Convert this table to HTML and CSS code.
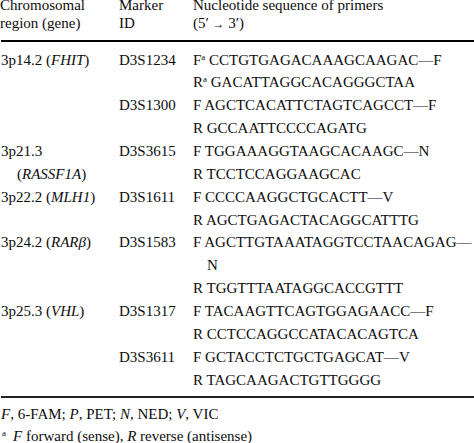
FILE: index.html
```html
<!DOCTYPE html>
<html>
<head>
<meta charset="utf-8">
<link rel="stylesheet" href="styles.css">
</head>
<body>
<div class="page">
<table class="primers">
<colgroup><col class="c1"><col class="c2"><col class="c3"></colgroup>
<thead>
<tr>
<th class="h1">Chromosomal<br>region (gene)</th>
<th>Marker<br>ID</th>
<th>Nucleotide sequence of primers<br>(5′ <span class="arr">→</span> 3′)</th>
</tr>
</thead>
<tbody>
<tr class="first"><td>3p14.2 (<i>FHIT</i>)</td><td>D3S1234</td><td>F<sup>a</sup> CCTGTGAGACAAAGCAAGAC—F</td></tr>
<tr><td></td><td></td><td>R<sup>a</sup> GACATTAGGCACAGGGCTAA</td></tr>
<tr><td></td><td>D3S1300</td><td>F AGCTCACATTCTAGTCAGCCT—F</td></tr>
<tr><td></td><td></td><td>R GCCAATTCCCCAGATG</td></tr>
<tr><td>3p21.3</td><td>D3S3615</td><td>F TGGAAAGGTAAGCACAAGC—N</td></tr>
<tr><td><span class="ind">(<i>RASSF1A</i>)</span></td><td></td><td>R TCCTCCAGGAAGCAC</td></tr>
<tr><td>3p22.2 (<i>MLH1</i>)</td><td>D3S1611</td><td>F CCCCAAGGCTGCACTT—V</td></tr>
<tr><td></td><td></td><td>R AGCTGAGACTACAGGCATTTG</td></tr>
<tr><td>3p24.2 (<i>RARβ</i>)</td><td>D3S1583</td><td class="wrap">F AGCTTGTAAATAGGTCCTAACAGAG—<br><span class="cont">N</span></td></tr>
<tr><td></td><td></td><td>R TGGTTTAATAGGCACCGTTT</td></tr>
<tr><td>3p25.3 (<i>VHL</i>)</td><td>D3S1317</td><td>F TACAAGTTCAGTGGAGAACC—F</td></tr>
<tr><td></td><td></td><td>R CCTCCAGGCCATACACAGTCA</td></tr>
<tr><td></td><td>D3S3611</td><td>F GCTACCTCTGCTGAGCAT—V</td></tr>
<tr class="last"><td></td><td></td><td>R TAGCAAGACTGTTGGGG</td></tr>
</tbody>
</table>
<div class="notes">
<p><i>F</i>, 6-FAM; <i>P</i>, PET; <i>N</i>, NED; <i>V</i>, VIC</p>
<p><sup class="fn">a</sup><span class="fntext"><i>F</i> forward (sense), <i>R</i> reverse (antisense)</span></p>
</div>
</div>
</body>
</html>
```
FILE: styles.css
```css
html, body {
  margin: 0;
  padding: 0;
  background: #ffffff;
}
body {
  font-family: "Liberation Serif", "Times New Roman", serif;
  font-size: 15px;
  color: #0d0d0d;
  overflow: hidden;
}
.page {
  width: 474px;
  height: 443px;
  overflow: hidden;
  padding-left: 1px;
  box-sizing: border-box;
}
.primers {
  border-collapse: collapse;
  margin-top: -4px;
  width: 473px;
  table-layout: fixed;
}
.c1 { width: 118px; }
.c2 { width: 74px; }
.c3 { width: 281px; }
.primers th {
  font-weight: normal;
  text-align: left;
  vertical-align: top;
  line-height: 18px;
  padding: 0 0 7px 0;
  border-bottom: 2px solid #000;
}
.primers th.h1 { position: relative; left: -1px; }
.primers td {
  padding: 0;
  line-height: 22.86px;
  vertical-align: top;
  white-space: nowrap;
}
.primers tr.first td { padding-top: 6.5px; }
.primers tr.last td {
  padding-bottom: 5px;
  border-bottom: 2px solid #222;
}
.ind { padding-left: 16px; }
.cont { padding-left: 14px; }
sup {
  font-size: 9px;
  line-height: 0;
  vertical-align: 5px;
}
.arr { font-size: 12px; }
.notes {
  padding-top: 5px;
}
.notes p {
  margin: 0;
  line-height: 22px;
}
.fn { margin-left: 1px; }
.fntext { margin-left: 7px; }
```
